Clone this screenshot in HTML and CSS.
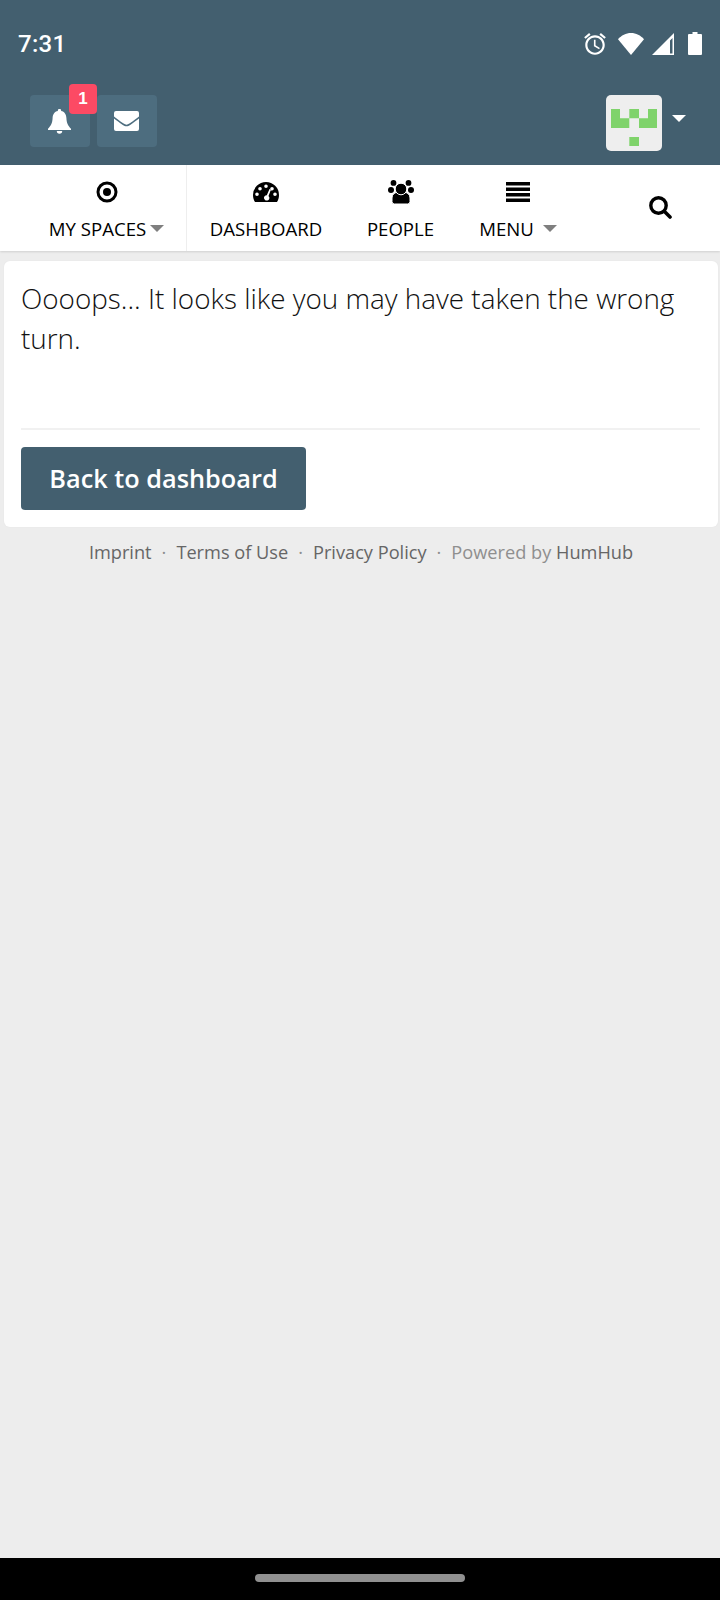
FILE: index.html
```html
<!DOCTYPE html>
<html lang="en">
<head>
<meta charset="utf-8">
<title>HumHub</title>
<link rel="stylesheet" href="styles.css">
</head>
<body>
<div class="screen">
  <header class="top">
    <div class="status">
      <span class="time">7:31</span>
      <div class="status-icons">
        <svg class="si-alarm" viewBox="0 0 24 24" width="26" height="26"><path fill="#fff" d="M22 5.720l-4.600-3.860-1.290 1.530 4.600 3.860L22 5.720zM7.880 3.390L6.600 1.860 2 5.710l1.290 1.530 4.590-3.850zM12.500 8H11v6l4.750 2.850.75-1.230-4-2.370V8zM12 4c-4.970 0-9 4.030-9 9s4.030 9 9 9 9-4.030 9-9-4.030-9-9-9zm0 16c-3.870 0-7-3.130-7-7s3.130-7 7-7 7 3.130 7 7-3.130 7-7 7z"/></svg>
        <svg class="si-wifi" viewBox="0 0 26 22" width="26" height="22"><path fill="#fff" d="M13 22L0 6.200C3.300 2.500 8 0 13 0s9.700 2.500 13 6.200z"/></svg>
        <svg class="si-signal" viewBox="0 0 22 22" width="22" height="22"><path fill="#fff" fill-rule="evenodd" d="M22 0v22H0zM20.500 5L18 7.500v13h2.500z"/></svg>
        <svg class="si-battery" viewBox="0 0 14 23" width="14" height="23"><path fill="#fff" d="M4.500 0h5v2H13a1 1 0 0 1 1 1v19a1 1 0 0 1-1 1H1a1 1 0 0 1-1-1V3a1 1 0 0 1 1-1h3.500z"/></svg>
      </div>
    </div>
    <div class="toolbar">
      <div class="tool-btns">
        <button class="tool-btn tool-bell">
          <svg viewBox="0 0 23 25" width="23" height="25"><path fill="#fff" d="M11.500 0a1.600 1.600 0 0 1 1.600 1.900c3.500.6 5.200 3.500 5.300 7.100.2 5.200 1.800 7.700 4.600 10.800V21H0v-1.200C2.800 16.700 4.400 14.200 4.600 9c.1-3.600 1.800-6.500 5.300-7.100A1.600 1.600 0 0 1 11.500 0zM8.800 22h5.400a2.700 2.700 0 0 1-5.400 0z"/></svg>
          <span class="badge">1</span>
        </button>
        <button class="tool-btn tool-mail">
          <svg viewBox="0 0 25 20" width="25" height="20"><path fill="#fff" d="M2 0h21a2 2 0 0 1 2 2v3.600c-2.200 2-6 4.600-9.600 7-1 .7-2 1.200-2.900 1.200s-1.900-.5-2.900-1.200C5.900 10.200 2.200 7.600 0 5.600V2a2 2 0 0 1 2-2zM0 7.500c2.500 2 5.400 4 8.800 6.400 1.200.8 2.400 1.400 3.700 1.400s2.500-.6 3.700-1.400c3.400-2.400 6.300-4.400 8.800-6.400V18a2 2 0 0 1-2 2H2a2 2 0 0 1-2-2z"/></svg>
        </button>
      </div>
      <div class="account">
        <div class="avatar">
          <svg viewBox="0 0 56 56" width="56" height="56"><path fill="#7fd36b" d="M5 14h9v9.300h9.300V33H5zM23.300 14H33v9.300h-9.700zM42 14h9v19H33v-9.700h9zM23.300 42H33v9h-9.700z"/></svg>
        </div>
        <span class="caret caret-white"></span>
      </div>
    </div>
  </header>
  <nav class="nav">
    <a class="nav-item nav-spaces">
      <svg class="nav-icon" viewBox="0 0 22 22" width="22" height="22"><circle cx="11" cy="11" r="9" fill="none" stroke="#000" stroke-width="3"/><circle cx="11" cy="11" r="4" fill="#000"/></svg>
      <span class="nav-label">MY SPACES<span class="caret caret-grey caret-tight"></span></span>
    </a>
    <a class="nav-item nav-dash">
      <svg class="nav-icon" viewBox="0 0 26 20" width="26" height="20"><path fill="#000" fill-rule="evenodd" d="M13 0a13 13 0 0 1 13 13c0 2.600-.7 5-2 7H2c-1.300-2-2-4.400-2-7A13 13 0 0 1 13 0zM13 2.500a1.800 1.800 0 1 0 0 3.600 1.800 1.800 0 0 0 0-3.600zM7 5a1.800 1.800 0 1 0 0 3.600A1.800 1.800 0 0 0 7 5zM19 5a1.800 1.800 0 1 0 0 3.600A1.800 1.800 0 0 0 19 5zM4 10.500a1.800 1.800 0 1 0 0 3.600 1.800 1.800 0 0 0 0-3.600zM22 10.500a1.800 1.800 0 1 0 0 3.600 1.800 1.800 0 0 0 0-3.600zM16.500 7L13.800 13.200a2.700 2.700 0 1 0 1.700.7l2.500-6.400z"/></svg>
      <span class="nav-label">DASHBOARD</span>
    </a>
    <a class="nav-item nav-people">
      <svg class="nav-icon" viewBox="0 0 26 24" width="26" height="24"><g fill="#000"><circle cx="5.500" cy="2.900" r="2.900"/><circle cx="20.500" cy="2.900" r="2.900"/><circle cx="3" cy="10" r="3"/><circle cx="23" cy="10" r="3"/><path d="M4 18c0-3.500 2.500-5.500 5-5.500h8c2.500 0 5 2 5 5.500v3.500a2.500 2.500 0 0 1-2.500 2.500h-13A2.500 2.500 0 0 1 4 21.500z" stroke="#fff" stroke-width="1"/><circle cx="13" cy="9" r="5.800" stroke="#fff" stroke-width="1"/></g></svg>
      <span class="nav-label">PEOPLE</span>
    </a>
    <a class="nav-item nav-menu">
      <svg class="nav-icon" viewBox="0 0 24 20" width="24" height="20"><path fill="#000" d="M0 0h24v3.500H0zM0 5.500h24V9H0zM0 11h24v3.500H0zM0 16.500h24V20H0z"/></svg>
      <span class="nav-label">MENU<span class="caret caret-grey"></span></span>
    </a>
    <a class="nav-search">
      <svg viewBox="0 0 23 23" width="23" height="23"><circle cx="9.500" cy="9.500" r="7.700" fill="none" stroke="#000" stroke-width="3.400"/><path d="M15.500 15.500L21 21" stroke="#000" stroke-width="3.600" stroke-linecap="round"/></svg>
    </a>
  </nav>
  <main class="content">
    <section class="card">
      <p class="message">Oooops... It looks like you may have taken the wrong turn.</p>
      <hr class="rule">
      <a class="back-btn">Back to dashboard</a>
    </section>
    <footer class="links">
      <a>Imprint</a><span class="dot">·</span><a>Terms of Use</a><span class="dot">·</span><a>Privacy Policy</a><span class="dot">·</span><span class="powered">Powered by <a>HumHub</a></span>
    </footer>
  </main>
  <div class="gesture"><span class="handle"></span></div>
</div>
</body>
</html>
```
FILE: styles.css
```css
* { box-sizing: border-box; }
html, body { margin: 0; padding: 0; }
body { font-family: "Open Sans", sans-serif; background: #ededed; }
.screen { width: 720px; height: 1600px; display: flex; flex-direction: column; overflow: hidden; }
.top { background: #435f6f; height: 165px; flex: none; color: #fff; }
.status { height: 87px; padding: 0 18px; display: flex; align-items: center; justify-content: space-between; }
.time { font-family: Roboto, sans-serif; font-size: 24px; font-weight: 500; letter-spacing: .3px; }
.status-icons { display: flex; align-items: center; }
.si-wifi { margin-left: 10px; }
.si-signal { margin-left: 8px; }
.si-battery { margin-left: 14px; }
.toolbar { display: flex; justify-content: space-between; padding: 8px 34px 0 30px; }
.tool-btns { display: flex; gap: 7px; }
.tool-btn { position: relative; width: 60px; height: 52px; border: 0; padding: 0; background: #4d6d7f; border-radius: 4px; display: flex; align-items: center; justify-content: center; }
.tool-bell { padding-right: 2px; }
.tool-mail { padding-right: 2px; }
.badge { position: absolute; top: -11px; left: 39px; width: 28px; height: 30px; background: #fc4a64; border-radius: 4px; color: #fff; font-size: 17px; font-weight: 600; display: flex; align-items: center; justify-content: center; }
.account { display: flex; align-items: center; gap: 10px; }
.avatar { width: 56px; height: 56px; background: #eeeeee; border-radius: 5px; }
.avatar svg { display: block; }
.caret { display: inline-block; width: 0; height: 0; border-left: 7px solid transparent; border-right: 7px solid transparent; }
.caret-white { border-top: 7px solid #fff; margin-top: -9px; }
.caret-grey { border-top: 7px solid #7f7f7f; margin-left: 9px; vertical-align: 4px; }
.caret-tight { margin-left: 4px; }
.nav { height: 86px; flex: none; background: #fff; display: flex; align-items: stretch; box-shadow: 0 1px 2px rgba(0,0,0,.12); position: relative; }
.nav-item { display: flex; flex-direction: column; align-items: center; color: #000; padding-top: 15px; }
.nav-icon { height: 24px; display: block; }
.nav-label { font-size: 18.6px; font-weight: 500; line-height: 24px; margin-top: 13px; white-space: nowrap; }
.nav-spaces { width: 187px; border-right: 1px solid #eeeeee; padding-left: 27px; }
.nav-dash { width: 158px; }
.nav-people { width: 111px; }
.nav-menu { width: 124px; }
.nav-search { width: 140px; display: flex; align-items: center; justify-content: center; padding: 0 0 2px 20px; }
.content { flex: 1; padding: 10px 2px 0 4px; }
.card { background: #fff; border-radius: 6px; height: 266px; padding: 17px 18px 0 17px; box-shadow: 0 0 2px rgba(0,0,0,.04); }
.message { margin: 0; font-size: 27.85px; font-weight: 300; line-height: 40px; color: #111; }
.rule { border: 0; border-top: 2px solid #f1f1f1; margin: 70px 0 17px; }
.back-btn { display: inline-flex; align-items: center; justify-content: center; width: 285px; height: 63px; padding-bottom: 2px; background: #435f6f; color: #fff; font-size: 25.3px; font-weight: 600; border-radius: 4px; }
.links { text-align: center; font-size: 18.2px; color: #8f8f8f; margin-top: 12px; line-height: 26px; }
.links a { color: #666; }
.dot { margin: 0 10px; }
.gesture { height: 42px; flex: none; background: #000; display: flex; align-items: center; justify-content: center; }
.handle { width: 210px; height: 8px; border-radius: 4px; background: #909090; margin-bottom: 2px; }
```
